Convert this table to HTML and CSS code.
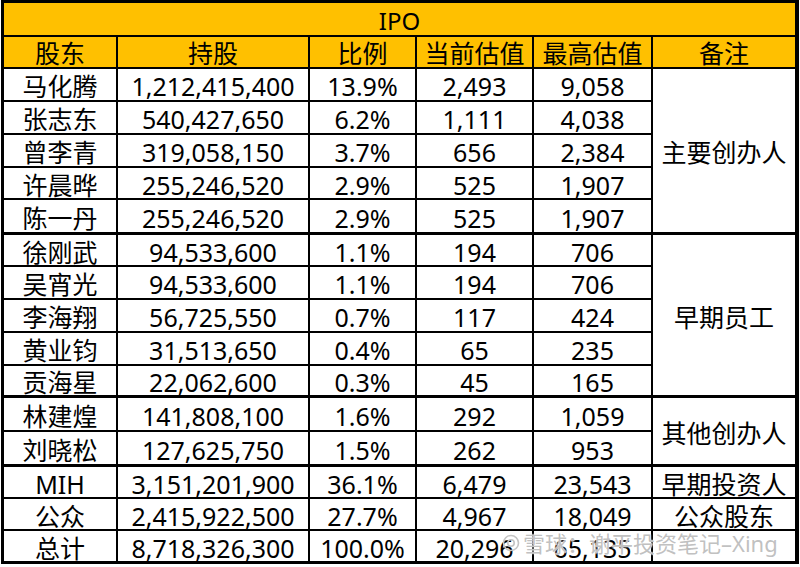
FILE: index.html
```html
<!DOCTYPE html>
<html lang="zh-CN">
<head>
<meta charset="utf-8">
<title>IPO</title>
<link rel="stylesheet" href="styles.css">
</head>
<body>
<div class="sheet">
  <div class="grid">
    <div class="cell title">IPO</div>
    <div class="cell head">股东</div>
    <div class="cell head">持股</div>
    <div class="cell head">比例</div>
    <div class="cell head">当前估值</div>
    <div class="cell head">最高估值</div>
    <div class="cell head last">备注</div>

    <div class="cell">马化腾</div><div class="cell">1,212,415,400</div><div class="cell">13.9%</div><div class="cell">2,493</div><div class="cell">9,058</div>
    <div class="cell last note span5 sep">主要创办人</div>
    <div class="cell">张志东</div><div class="cell">540,427,650</div><div class="cell">6.2%</div><div class="cell">1,111</div><div class="cell">4,038</div>
    <div class="cell">曾李青</div><div class="cell">319,058,150</div><div class="cell">3.7%</div><div class="cell">656</div><div class="cell">2,384</div>
    <div class="cell">许晨晔</div><div class="cell">255,246,520</div><div class="cell">2.9%</div><div class="cell">525</div><div class="cell">1,907</div>
    <div class="cell sep">陈一丹</div><div class="cell sep">255,246,520</div><div class="cell sep">2.9%</div><div class="cell sep">525</div><div class="cell sep">1,907</div>

    <div class="cell">徐刚武</div><div class="cell">94,533,600</div><div class="cell">1.1%</div><div class="cell">194</div><div class="cell">706</div>
    <div class="cell last note span5 sep">早期员工</div>
    <div class="cell">吴宵光</div><div class="cell">94,533,600</div><div class="cell">1.1%</div><div class="cell">194</div><div class="cell">706</div>
    <div class="cell">李海翔</div><div class="cell">56,725,550</div><div class="cell">0.7%</div><div class="cell">117</div><div class="cell">424</div>
    <div class="cell">黄业钧</div><div class="cell">31,513,650</div><div class="cell">0.4%</div><div class="cell">65</div><div class="cell">235</div>
    <div class="cell sep">贡海星</div><div class="cell sep">22,062,600</div><div class="cell sep">0.3%</div><div class="cell sep">45</div><div class="cell sep">165</div>

    <div class="cell">林建煌</div><div class="cell">141,808,100</div><div class="cell">1.6%</div><div class="cell">292</div><div class="cell">1,059</div>
    <div class="cell last note span2 sep">其他创办人</div>
    <div class="cell sep">刘晓松</div><div class="cell sep">127,625,750</div><div class="cell sep">1.5%</div><div class="cell sep">262</div><div class="cell sep">953</div>

    <div class="cell">MIH</div><div class="cell">3,151,201,900</div><div class="cell">36.1%</div><div class="cell">6,479</div><div class="cell">23,543</div><div class="cell last">早期投资人</div>
    <div class="cell">公众</div><div class="cell">2,415,922,500</div><div class="cell">27.7%</div><div class="cell">4,967</div><div class="cell">18,049</div><div class="cell last">公众股东</div>
    <div class="cell end">总计</div><div class="cell end">8,718,326,300</div><div class="cell end">100.0%</div><div class="cell end">20,296</div><div class="cell end">65,135</div><div class="cell last end"></div>
  </div>
  <div class="watermark">
    <svg class="wm-logo" width="18" height="18" viewBox="0 0 18 18" aria-hidden="true">
      <circle cx="9" cy="9" r="7.5" fill="none" stroke="#c4c4c4" stroke-width="1.6"/>
      <circle cx="9" cy="9" r="3.2" fill="none" stroke="#c4c4c4" stroke-width="1.6"/>
    </svg>
    <span>雪球：谢平投资笔记–Xing</span>
  </div>
</div>
</body>
</html>
```

FILE: styles.css
```css
html, body {
  margin: 0;
  padding: 0;
  background: #ffffff;
}

body {
  font-family: "Noto Sans", "Noto Sans CJK SC", sans-serif;
  color: #000;
}

.sheet {
  position: relative;
  width: 800px;
  height: 567px;
}

.grid {
  display: grid;
  width: max-content;
  margin-left: 1px;
  grid-template-columns: 114px 192px 107px 117px 119px 142px;
  grid-template-rows: 34px 32px 33px 33px 33px 32px 35px 32px 33px 33px 33px 32px 34px 35px 32px 32px 30px;
  border: 3px solid #000;
  border-right-width: 4px;
}

.cell {
  box-sizing: border-box;
  display: flex;
  align-items: center;
  justify-content: center;
  border-right: 2px solid #000;
  border-bottom: 2px solid #000;
  font-size: 25px;
  line-height: 1;
  padding-top: 4px;
  white-space: nowrap;
}

.title {
  grid-column: 1 / 7;
  background: #ffc000;
  border-right: none;
  font-size: 24px;
  padding-top: 3px;
}

.head {
  background: #ffc000;
  padding-top: 3px;
}

.last {
  border-right: none;
}

.sep {
  border-bottom-width: 3px;
}

.end {
  border-bottom: none;
}

.span5 {
  grid-row: span 5;
}

.span2 {
  grid-row: span 2;
}

.watermark {
  position: absolute;
  left: 502px;
  top: 532px;
  display: flex;
  align-items: center;
  gap: 3px;
  font-size: 22px;
  line-height: 1;
  color: rgba(185, 185, 185, 0.9);
  text-shadow: 0 0 2px #fff, 0 0 1px #fff;
}
```
